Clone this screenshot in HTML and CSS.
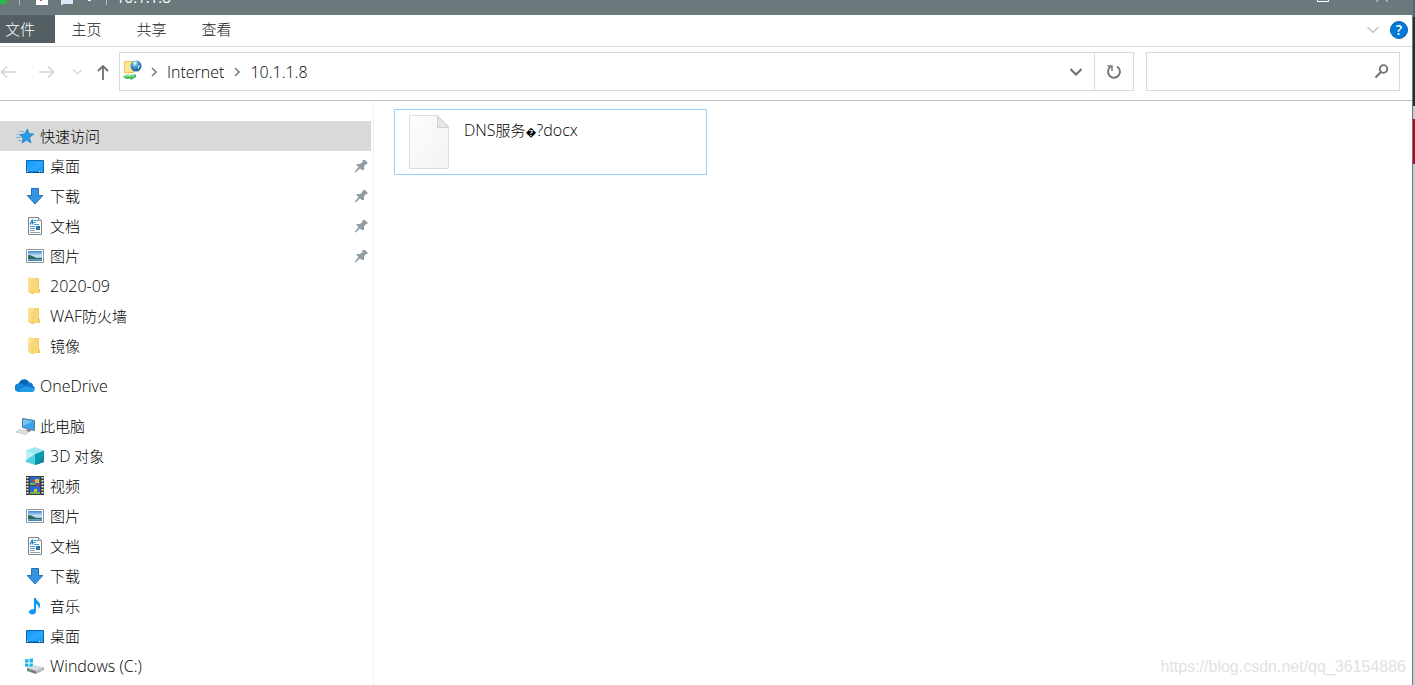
FILE: index.html
```html
<!DOCTYPE html>
<html lang="zh-CN">
<head>
<meta charset="utf-8">
<title>10.1.1.8</title>
<link rel="stylesheet" href="styles.css">
</head>
<body>
<svg class="defs" aria-hidden="true">
  <defs>
    <linearGradient id="g-blue" x1="0" y1="0" x2="1" y2="1"><stop offset="0" stop-color="#0d98f8"/><stop offset=".55" stop-color="#2ba8ff"/><stop offset="1" stop-color="#1296f3"/></linearGradient>
    <linearGradient id="g-sky" x1="0" y1="0" x2="0" y2="1"><stop offset="0" stop-color="#3f86d8"/><stop offset=".5" stop-color="#cfe9f8"/><stop offset="1" stop-color="#3b7cae"/></linearGradient>
    <linearGradient id="g-fold" x1="0" y1="0" x2="1" y2="1"><stop offset="0" stop-color="#ffe7a2"/><stop offset="1" stop-color="#f5cd62"/></linearGradient>
    <linearGradient id="g-page" x1="0" y1="0" x2="1" y2="1"><stop offset="0" stop-color="#fdfdfd"/><stop offset="1" stop-color="#f1f3f5"/></linearGradient>
    <radialGradient id="g-globe" cx=".4" cy=".3" r=".7"><stop offset="0" stop-color="#a9dcf5"/><stop offset=".5" stop-color="#3b93cd"/><stop offset="1" stop-color="#175a94"/></radialGradient>
    <symbol id="desktop" viewBox="0 0 20 20"><path fill="url(#g-blue)" stroke="#0867ae" d="M1.500 4.500h17v12h-17z"/><path fill="#075a9b" d="M1 15.500h18V17H1z"/><path fill="#fff" d="M2 15h1v1H2zM14 15h1v1h-1zM16 15h1v1h-1z"/></symbol>
    <symbol id="download" viewBox="0 0 20 20"><path fill="#3593e2" stroke="#2270b5" d="M6.500 2.500h7v7h4.300L10 18 2.200 9.500h4.300z"/></symbol>
    <symbol id="doc" viewBox="0 0 20 20"><path fill="#fff" stroke="#7f8487" d="M3.500 1.500h10l3 3v14h-13z"/><path fill="#ddd" stroke="#8f9496" d="M13.500 1.500v3h3"/><path stroke="#43a0df" d="M9 4.500h4M8 6.500h3M9 8.500h5M5 10.500h5M5 12.500h5" fill="none"/><path stroke="#1785d0" stroke-width="1.300" fill="none" d="M5 8.500l2.500-5v5"/><path fill="#2878b4" d="M11 10h4v4h-4z"/><path fill="#48705e" d="M11 13h4v1h-4z"/><path stroke="#8aa5b8" d="M5 14.500h5M5 16.500h10"/></symbol>
    <symbol id="picture" viewBox="0 0 20 20"><path fill="#fff" stroke="#929698" d="M1.500 3.500h17v13h-17z"/><path fill="url(#g-sky)" d="M3 5h14v10H3z"/><path fill="#2c6a5c" d="M3 9c4 0 6 2 8 3h6v1H3z"/></symbol>
    <symbol id="folder" viewBox="0 0 20 20"><path fill="#f2ca5f" d="M9 2h5v11h1v4H8z"/><path fill="url(#g-fold)" d="M3 1.500h4.500L9 3v15l-1 .5L3 16z"/><path fill="#f9d777" d="M9 2.500l4 .2V14l1 2.500H9z"/></symbol>
    <symbol id="star" viewBox="0 0 20 20"><path fill="#2b9be8" stroke="#1879c2" stroke-width=".8" d="M12.500 3l1.200 4.800 5 .2-4.300 3.500 1.600 5.500-4.400-3-4.600 3 1.200-5L4.500 8.500l5-.5z"/><path stroke="#74b6e5" d="M4 5.500h5M2 8.500h4M1 11.500h5M3 14.500h3"/></symbol>
    <symbol id="cloud" viewBox="0 0 20 20"><path fill="#0864b8" d="M3.500 8C5 2.500 12 1.500 14.500 7L10 12z"/><path fill="#1684d7" d="M1 15a4.200 4.200 0 0 1 3-7.500c3-.5 5 1 9 5.500l-4 3H3.500z"/><path fill="#0f78d0" d="M8 10l6-3.500c3 0 4 1.500 4 3.500 2 .5 2 2 1.500 3z"/><path fill="#239be8" d="M2 15.500L10.500 10l9 2.500c.5 2-.5 3.500-2.500 3.500H4z"/></symbol>
    <symbol id="pc" viewBox="0 0 20 20"><path fill="#38a6ef" stroke="#66798b" d="M7.500 2.500l12 2v10l-12-3z"/><path fill="#71c5fa" d="M8 3.300l9.500 2L8 10z"/><path fill="#6d7880" d="M12 13l4 1-1 2-4-1z"/><path fill="#dce0e3" stroke="#b3b9bd" stroke-width=".6" d="M4.500 13.500l9.500 2-3 3L1 16z"/></symbol>
    <symbol id="cube" viewBox="0 0 20 20"><path fill="#9ce8ef" d="M1 4.500L10 1l9 3.500L10 8z"/><path fill="#53d1df" d="M1 4.500L10 8v11l-9-3z"/><path fill="#0a9bb0" d="M10 8l9-3.500V16l-9 3z"/><path fill="#bdf3f4" d="M1 4.500L10 8l-9 6z"/><path fill="#1582a0" d="M10 19l9-9v6z"/></symbol>
    <symbol id="video" viewBox="0 0 20 20"><path fill="#3b3d40" d="M1 0h18v19H1z"/><path fill="#236ad1" d="M5 1h10v8H5zM5 10h10v8H5z"/><path stroke="#eee" stroke-width="2" stroke-dasharray="1.500 1.500" d="M2.500 1v18M17.500 1v18"/><path fill="#75b545" d="M5 7h5v2H5zM5 16h10v2H5z"/><path fill="#e2b932" d="M10 3h4v4h-4zM9 13h3v3H9z"/><path fill="#d33b26" d="M8 4h2v2H8zM11 8h3v2h-3z"/></symbol>
    <symbol id="music" viewBox="0 0 20 20"><path fill="#0c98f2" d="M9 2h2c0 3 5 4 4 8-.2 1.500-1 2.500-1.500 3 .5-3-.5-4-2.500-5v7c0 2-1.500 3.500-3.500 3.500S4 17.500 4 16s2-3.500 5-2.500z"/></symbol>
    <symbol id="drive" viewBox="0 0 20 20"><path fill="#19b5ec" d="M0 3.500L3.500 3v3.500H0zM4.500 2.800L8 2.500v4H4.500zM0 7.500h3.500V11L0 10.500zM4.500 7.500H8v4l-3.500-.5z"/><path fill="#d8dadd" d="M2 12l8-3 9 2.500-8 4z"/><path fill="#77797c" d="M2 12l9 3v3l-9-3z"/><path fill="#b5b8bb" d="M11 15l8-4v3L11 18z"/><path fill="#58e15a" d="M4 14l2 .6v1L4 15z"/></symbol>
    <symbol id="pin" viewBox="0 0 16 16"><path fill="#919da5" d="M9.500 2H12l2.500 2.500V6H13l-2 2.500V12H9L7 10.500 2.500 14.500 1.500 14l4-5L3.500 7V6H7l2.500-2z"/></symbol>
    <symbol id="chev-r" viewBox="0 0 8 10"><path fill="none" stroke="#767676" stroke-width="1.500" d="M2 1l4 4-4 4"/></symbol>
    <symbol id="chev-d" viewBox="0 0 12 8"><path fill="none" stroke="currentColor" d="M.5 1L6 6.500 11.500 1" stroke-width="var(--stroke, 1)"/></symbol>
  </defs>
</svg>

<div class="screen">
  <div class="window">
    <header class="titlebar">
      <svg class="title-icons" viewBox="0 0 110 8" aria-hidden="true"><path fill="#29bb46" d="M0 0h7v3H5v2L0 3z"/><path stroke="#aebabd" d="M19.500 0v5M106.500 0v5"/><path fill="#fff" d="M36 0h12v5H36z"/><path fill="#df5a32" d="M40 0h2v1h-2z"/><path fill="#d8e6f6" d="M61 0h12v4H63v1h-2z"/><path fill="#f5f5f5" d="M88 0h3v1h-3z"/></svg>
      <span class="title">10.1.1.8</span>
      <svg class="caption" viewBox="0 0 95 8" aria-hidden="true"><path fill="none" stroke="#fff" d="M7.500 0v1.500h11V0M66.500 1.500l2-2M77.500 1.500l-2-2"/></svg>
    </header>

    <nav class="tabs">
      <button class="tab file">文件</button>
      <button class="tab">主页</button>
      <button class="tab">共享</button>
      <button class="tab">查看</button>
      <span class="spacer"></span>
      <button class="plain expand" aria-label="展开功能区"><svg width="12" height="8"><use href="#chev-d"/></svg></button>
      <button class="help" aria-label="帮助">?</button>
    </nav>

    <div class="toolbar">
      <div class="history">
        <button class="plain off" aria-label="后退"><svg width="16" height="14" viewBox="0 0 16 14"><path fill="none" stroke="currentColor" stroke-width="1.500" d="M16 7H1.500M7 1.500L1.500 7 7 12.500"/></svg></button>
        <button class="plain off" aria-label="前进"><svg width="16" height="14" viewBox="0 0 16 14"><path fill="none" stroke="currentColor" stroke-width="1.500" d="M0 7h14.500M9 1.500L14.500 7 9 12.500"/></svg></button>
        <button class="plain off recent" aria-label="最近"><svg width="9" height="6"><use href="#chev-d"/></svg></button>
        <button class="plain up" aria-label="向上"><svg width="12" height="16" viewBox="0 0 12 16"><path fill="none" stroke="currentColor" stroke-width="1.800" d="M6 16V2M1 7l5-5 5 5"/></svg></button>
      </div>
      <div class="address">
        <svg class="site" width="22" height="22" viewBox="0 0 22 22" aria-hidden="true"><path fill="#ffe591" stroke="#ecc54f" d="M3.500 3.500h9v11h-9z"/><circle cx="15" cy="8" r="5.500" fill="url(#g-globe)"/><path fill="#d9f0df" d="M13 4l2-1 1 2-2 2-2-1zM17 8l2-1-1 3-1 1z"/><path fill="#3dbc55" d="M2 18.500l5-2.500 1 1 7-.5V19l-5 3-1-1.500-4 .5z"/><path fill="#a5e7ac" d="M2 18l5-2v1l6 .5v1H4z"/></svg>
        <svg class="sep" width="8" height="10"><use href="#chev-r"/></svg>
        <button class="plain crumb">Internet</button>
        <svg class="sep" width="8" height="10"><use href="#chev-r"/></svg>
        <button class="plain crumb">10.1.1.8</button>
        <span class="spacer"></span>
        <button class="plain drop" aria-label="以前的位置"><svg width="12" height="8"><use href="#chev-d"/></svg></button>
        <button class="plain refresh" aria-label="刷新"><svg width="16" height="16" viewBox="0 0 16 16"><path fill="none" stroke="#767676" stroke-width="2" d="M11 2.500a6 6 0 1 1-6.500.3"/><path fill="none" stroke="#767676" stroke-width="1.500" d="M1.500 2H6v5"/></svg></button>
      </div>
      <label class="search">
        <input type="text" aria-label="搜索">
        <svg width="15" height="15" viewBox="0 0 15 15" aria-hidden="true"><circle cx="9.500" cy="5" r="3.800" fill="none" stroke="#6f6f6f" stroke-width="1.800"/><path stroke="#6f6f6f" stroke-width="2" d="M7 8l-5.500 5.500"/></svg>
      </label>
    </div>

    <div class="body">
      <aside class="sidebar">
        <ul class="tree">
          <li class="row root active"><svg class="icon"><use href="#star"/></svg><span>快速访问</span></li>
          <li class="row"><svg class="icon"><use href="#desktop"/></svg><span>桌面</span><svg class="pin"><use href="#pin"/></svg></li>
          <li class="row"><svg class="icon"><use href="#download"/></svg><span>下载</span><svg class="pin"><use href="#pin"/></svg></li>
          <li class="row"><svg class="icon"><use href="#doc"/></svg><span>文档</span><svg class="pin"><use href="#pin"/></svg></li>
          <li class="row"><svg class="icon"><use href="#picture"/></svg><span>图片</span><svg class="pin"><use href="#pin"/></svg></li>
          <li class="row"><svg class="icon"><use href="#folder"/></svg><span class="latin">2020-09</span></li>
          <li class="row"><svg class="icon"><use href="#folder"/></svg><span><span class="latin">WAF</span>防火墙</span></li>
          <li class="row"><svg class="icon"><use href="#folder"/></svg><span>镜像</span></li>
        </ul>
        <ul class="tree">
          <li class="row root"><svg class="icon"><use href="#cloud"/></svg><span class="latin">OneDrive</span></li>
        </ul>
        <ul class="tree">
          <li class="row root"><svg class="icon"><use href="#pc"/></svg><span>此电脑</span></li>
          <li class="row"><svg class="icon"><use href="#cube"/></svg><span><span class="latin">3D</span> 对象</span></li>
          <li class="row"><svg class="icon"><use href="#video"/></svg><span>视频</span></li>
          <li class="row"><svg class="icon"><use href="#picture"/></svg><span>图片</span></li>
          <li class="row"><svg class="icon"><use href="#doc"/></svg><span>文档</span></li>
          <li class="row"><svg class="icon"><use href="#download"/></svg><span>下载</span></li>
          <li class="row"><svg class="icon"><use href="#music"/></svg><span>音乐</span></li>
          <li class="row"><svg class="icon"><use href="#desktop"/></svg><span>桌面</span></li>
          <li class="row"><svg class="icon"><use href="#drive"/></svg><span class="latin">Windows (C:)</span></li>
        </ul>
      </aside>
      <main class="files">
        <div class="file-tile">
          <svg width="40" height="54" viewBox="0 0 40 54" aria-hidden="true"><path fill="url(#g-page)" stroke="#dcdddd" d="M.5.5h28l11 11v42H.5z"/><path fill="#e6e6e6" stroke="#cfd0d0" d="M28.500.5v12h11z"/></svg>
          <span class="file-name"><span class="latin">DNS</span>服务<span class="unknown">&#xFFFD;</span><span class="latin">?docx</span></span>
        </div>
        <div class="watermark">https://blog.csdn.net/qq_36154886</div>
      </main>
    </div>
  </div>
  <div class="behind" aria-hidden="true">
    <div class="behind-dark"></div>
    <div class="behind-gap"></div>
    <div class="behind-red"></div>
  </div>
</div>
</body>
</html>
```

FILE: styles.css
```css
* { box-sizing: border-box; }

body {
  margin: 0;
  font: 15px/20px "Open Sans", "Noto Sans CJK SC", sans-serif;
  font-weight: 300;
  color: #000;
  background: #fff;
}

button, input { font: inherit; color: inherit; }

.defs { position: absolute; width: 0; height: 0; }

.latin, .crumb { font-size: 16px; }
.unknown { font-size: 11px; }

.screen {
  display: flex;
  height: 100vh;
  overflow: hidden;
}

.window {
  flex: 1;
  min-width: 0;
  display: flex;
  flex-direction: column;
  border-right: 1px solid #6b797d;
  background: #fff;
}

.titlebar {
  flex: none;
  display: flex;
  align-items: flex-end;
  gap: 6px;
  height: 15px;
  padding-bottom: 7px;
  overflow: hidden;
  background: #6b797d;
  color: #fff;
}
.title-icons { width: 110px; height: 8px; }
.title { flex: 1; line-height: 20px; font-weight: 400; padding-bottom: 1px; }
.caption { width: 95px; height: 8px; margin-right: 7px; }

.tabs {
  flex: none;
  display: flex;
  align-items: flex-start;
  height: 32px;
  border-bottom: 1px solid #dadbdc;
}
.tab {
  width: 65px;
  height: 28px;
  padding: 0 2px 0 0;
  border: 0;
  background: none;
  color: #222;
  line-height: 29px;
}
.tab.file {
  width: 55px;
  padding-right: 15px;
  background: #535f62;
  color: #fff;
}
.spacer { flex: 1; }

.plain {
  display: flex;
  align-items: center;
  justify-content: center;
  padding: 0;
  border: 0;
  background: none;
}
.expand { width: 32px; height: 30px; color: #8c8c8c; }
.help {
  width: 18px;
  height: 18px;
  margin: 6px 4px 0 1px;
  padding: 0;
  border: 1px solid #0562b5;
  border-radius: 50%;
  background: #0078d7;
  color: #fff;
  font-size: 14px;
  line-height: 16px;
  font-weight: 600;
}

.toolbar {
  flex: none;
  display: grid;
  grid-template-columns: 119px minmax(0, 4fr) 12px minmax(0, 1fr);
  height: 54px;
  padding: 5px 12px 9px 0;
  border-bottom: 1px solid #bfbfbf;
}
.history { display: flex; }
.history .plain { width: 39px; justify-content: flex-start; color: #6f6f6f; }
.history .off { color: #d2d2d2; }
.history .off:nth-child(2) { width: 34px; }
.history .recent { width: 24px; --stroke: 1.500; }
.history .up { width: 20px; }

.address {
  display: flex;
  align-items: stretch;
  border: 1px solid #d9d9d9;
}
.site { margin: 5px 7px 0 1px; }
.sep { align-self: center; }
.crumb { margin: 0 9px; font-weight: 300; }
.drop { width: 36px; color: #6f6f6f; --stroke: 2; }
.refresh { width: 39px; border-left: 1px solid #d9d9d9; }

.search {
  grid-column: 4;
  display: flex;
  align-items: center;
  padding-right: 10px;
  border: 1px solid #d9d9d9;
}
.search input {
  flex: 1;
  min-width: 0;
  height: 30px;
  border: 0;
  outline: 0;
  background: none;
}

.body { flex: 1; min-height: 0; display: flex; }

.sidebar {
  flex: none;
  width: 374px;
  padding: 20px 2px 0 0;
  border-right: 1px solid #f2f2f2;
  overflow: hidden;
}
.tree { margin: 0 0 10px; padding: 0; list-style: none; }
.row {
  display: flex;
  align-items: center;
  gap: 5px;
  height: 30px;
  padding: 0 2px 0 25px;
}
.row.root { padding-left: 15px; }
.row.active { background: #d9d9d9; }
.icon { width: 20px; height: 20px; }
.pin { width: 16px; height: 16px; margin-left: auto; }

.files {
  flex: 1;
  min-width: 0;
  display: flex;
  flex-direction: column;
  justify-content: space-between;
  padding: 8px 6px 8px 20px;
}
.file-tile {
  display: flex;
  gap: 15px;
  width: 313px;
  height: 66px;
  padding: 5px 14px;
  border: 1px solid #99d1f9;
}
.file-name { padding-top: 5px; }

.watermark {
  align-self: flex-end;
  font: 16px/20px "Liberation Sans", Arial, sans-serif;
  color: #e2e2e2;
}

.behind { flex: none; width: 2px; background: #c9cbcf; }
.behind-dark { height: 106px; background: #2e2e30; border-top: 17px solid #53676f; }
.behind-gap { height: 13px; }
.behind-red { height: 45px; background: #b1061b; }
```
